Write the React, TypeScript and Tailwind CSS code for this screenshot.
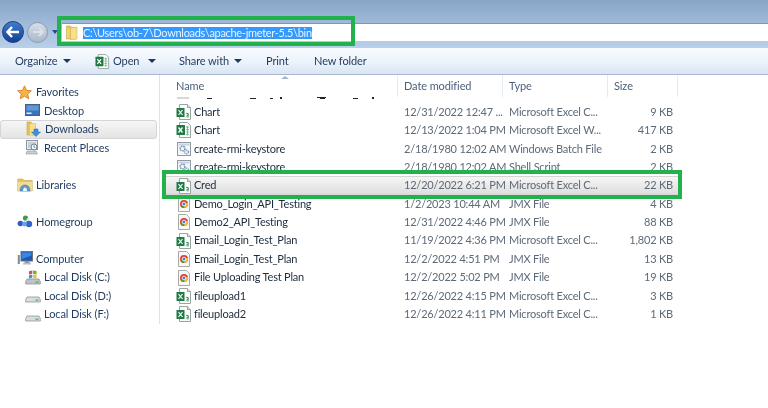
import type { ReactNode } from "react";

const ExcelCsv = () => (
  <svg width="16" height="16" viewBox="0 0 16 16">
    <path d="M3.5 .5h8l3 3v12h-11z" fill="#fbfcfb" stroke="#9aa5a0" />
    <path d="M11.5 .5v3h3" fill="#e4e9e6" stroke="#9aa5a0" />
    <rect x="0.5" y="4" width="8" height="9" fill="#1f7a45" rx="0.5" />
    <path d="M2.5 6l4 5M6.5 6l-4 5" stroke="#fff" strokeWidth="1.2" />
    <path d="M10 9.5a1.5 1.5 0 1 1 0 2.5M12 9v3.5M12.5 12.5l-.8 1.2" stroke="#2e7d51" strokeWidth="0.8" fill="none" />
  </svg>
);

const ExcelBook = ({ size = 16 }: { size?: number }) => (
  <svg width={size} height={size} viewBox="0 0 16 16" className="shrink-0">
    <path d="M3.5 .5h8l3 3v12h-11z" fill="#fbfcfb" stroke="#9aa5a0" />
    <rect x="0.5" y="3" width="8.5" height="10" fill="#1f7a45" rx="0.5" />
    <path d="M2.5 5.5l4 5M6.5 5.5l-4 5" stroke="#fff" strokeWidth="1.3" />
    <path d="M10 5h3M10 7.5h3M10 10h3M10 12.5h3M11.5 4v9.5" stroke="#6fae88" strokeWidth="0.8" fill="none" />
  </svg>
);

const ScriptIcon = () => (
  <svg width="16" height="16" viewBox="0 0 16 16">
    <rect x="1.5" y="1.5" width="13" height="13" fill="#f4f6f8" stroke="#8f9aa5" />
    <rect x="2.5" y="2.5" width="11" height="2" fill="#c7d3e0" />
    <circle cx="6.5" cy="7.5" r="2.4" fill="none" stroke="#5f86ad" strokeWidth="1.4" strokeDasharray="1.4 .8" />
    <circle cx="10.5" cy="11" r="1.9" fill="none" stroke="#6f8fb0" strokeWidth="1.2" strokeDasharray="1.2 .7" />
  </svg>
);

const JmxIcon = () => (
  <svg width="16" height="16" viewBox="0 0 16 16">
    <path d="M2.5 .5h8l3 3v12h-11z" fill="#f8f8f6" stroke="#a8aaa5" />
    <circle cx="8" cy="8" r="4" fill="#d9463a" />
    <path d="M8 8L4.6 10.2A4 4 0 0 0 8.5 12z" fill="#3f9e4d" />
    <path d="M8 8l.5 4A4 4 0 0 0 11.8 6.8z" fill="#f3c22f" />
    <circle cx="8" cy="8" r="1.8" fill="#3f7fdc" stroke="#fff" strokeWidth="0.8" />
  </svg>
);

const Folder = () => (
  <svg width="13" height="15" viewBox="0 0 12 15">
    <path d="M1 1h4l1 1.5h4.5V14H1z" fill="#e9c65f" stroke="#c9a446" strokeWidth="0.6" />
    <path d="M5 3l6.5-1v12L5 14.5z" fill="#f6e08e" stroke="#cfa94a" strokeWidth="0.5" />
    <path d="M1.5 4h2.5v9H1.5z" fill="#f3d777" />
  </svg>
);

const Star = () => (
  <svg width="15" height="15" viewBox="0 0 15 15">
    <path d="M7.5 .8l2 4.5 4.9.5-3.7 3.2 1.1 4.8-4.3-2.5-4.3 2.5 1.1-4.8L.6 5.8l4.9-.5z" fill="#f5b53f" stroke="#d8742a" strokeWidth="0.8" />
  </svg>
);

const DesktopIcon = () => (
  <svg width="15" height="13" viewBox="0 0 15 13">
    <rect x="0.5" y="0.5" width="14" height="11" fill="#3f73b8" stroke="#47617f" />
    <rect x="1.5" y="1.5" width="12" height="5" fill="#5f9ad8" />
    <rect x="1.5" y="8.5" width="5" height="1.5" fill="#e6eef6" />
  </svg>
);

const DownloadsIcon = () => (
  <svg width="15" height="16" viewBox="0 0 15 16">
    <path d="M1 1h4l1 1.5h3.5V14H1z" fill="#e6c25c" stroke="#c9a446" strokeWidth="0.6" />
    <path d="M4 3l5.5-1v11L4 14.5z" fill="#f6e08e" />
    <path d="M8 8h4v3h2.5L10 15.5 5.5 11H8z" fill="#3d8fe0" stroke="#2a6bb5" strokeWidth="0.5" />
  </svg>
);

const RecentIcon = () => (
  <svg width="15" height="15" viewBox="0 0 15 15">
    <rect x="1.5" y="0.5" width="11" height="9" fill="#e8ecef" stroke="#8d979f" />
    <rect x="3" y="2" width="8" height="6" fill="#c4d0da" />
    <circle cx="9" cy="7" r="3" fill="#f2f5f7" stroke="#6d8498" />
    <path d="M9 5.2V7l1.4.8" stroke="#4a6a85" strokeWidth="0.7" fill="none" />
    <path d="M2 11h9l1.5 3H1z" fill="#c9d0d6" stroke="#8d979f" strokeWidth="0.6" />
  </svg>
);

const LibraryIcon = () => (
  <svg width="16" height="14" viewBox="0 0 16 14">
    <path d="M.8 1h5l1 1.5h8.4V13H.8z" fill="#e4c468" stroke="#c2a24c" strokeWidth="0.6" />
    <path d="M1 4h14v9H1z" fill="#f2dc92" />
    <path d="M3 13c0-4 2-6 5-6s5 2 5 6z" fill="#5b9bd0" stroke="#3f78a8" strokeWidth="0.5" />
    <path d="M6 13c0-2 .8-3.4 2-3.4s2 1.4 2 3.4z" fill="#f0f4f8" />
  </svg>
);

const HomegroupIcon = () => (
  <svg width="16" height="14" viewBox="0 0 16 14">
    <circle cx="8.5" cy="3" r="2.6" fill="#3e9a46" />
    <circle cx="3.4" cy="8.5" r="2.8" fill="#2b5fbf" />
    <circle cx="12" cy="9" r="3.2" fill="#3267c8" />
    <circle cx="7.5" cy="9" r="2.4" fill="#6fa0e6" />
    <circle cx="11" cy="4.5" r="1.4" fill="#d8e6f6" />
  </svg>
);

const ComputerIcon = () => (
  <svg width="16" height="15" viewBox="0 0 16 15">
    <rect x="4" y="0.5" width="11.5" height="9.5" fill="#1d56b8" stroke="#6d7680" />
    <path d="M5 1.5h9.5v3L5 8z" fill="#3a86e0" />
    <rect x="7.5" y="10" width="5" height="2" fill="#8f98a0" />
    <rect x="6" y="12" width="8" height="1.5" fill="#b8bec4" />
    <rect x="0.8" y="4" width="2" height="9" fill="#7f8890" />
  </svg>
);

const DiskIcon = ({ windows }: { windows?: boolean }) => (
  <svg width="16" height="15" viewBox="0 0 16 15">
    {windows && (
      <g>
        <path d="M4 1.2l3.3-.7v3.3L4 4.5z" fill="#e0503a" />
        <path d="M8 .4l3.6.7v3.3L8 3.7z" fill="#6fb23f" />
        <path d="M4 5.2l3.3-.7v3.3L4 8.5z" fill="#3f8ed8" />
        <path d="M8 4.4l3.6.7v3.3L8 7.7z" fill="#f0c030" />
      </g>
    )}
    <path d="M2 9h12l1.3 2.5V14H.7v-2.5z" fill={windows ? "#b9c4cc" : "#d8dde1"} stroke="#7f8a92" strokeWidth="0.7" />
    <rect x="10.5" y="11.5" width="3" height="1.2" fill="#4fb04a" />
  </svg>
);

// bottom edge of the row scrolled out above "Chart"
const ClippedRow = () => (
  <svg width="220" height="6" viewBox="0 0 220 6" className="ml-[16px] block">
    <path d="M1 0h12v2H1z" fill="#d5d8d8" />
    <path d="M31 1h5v1h-5zM74 1h6v1h-6zM94 1h3v1h-3zM104 0h2v2h-2zM141 0h9v1h-9zM144 1h5v1h-5zM177 1h5v1h-5zM196 0h2v2h-2z" fill="#20262c" />
  </svg>
);

type FileRow = { icon: ReactNode; name: string; date: string; type: string; size: string; selected?: boolean };

const files: FileRow[] = [
  { icon: <ExcelCsv />, name: "Chart", date: "12/31/2022 12:47 ...", type: "Microsoft Excel C...", size: "9 KB" },
  { icon: <ExcelBook />, name: "Chart", date: "12/13/2022 1:04 PM", type: "Microsoft Excel W...", size: "417 KB" },
  { icon: <ScriptIcon />, name: "create-rmi-keystore", date: "2/18/1980 12:02 AM", type: "Windows Batch File", size: "2 KB" },
  { icon: <ScriptIcon />, name: "create-rmi-keystore", date: "2/18/1980 12:02 AM", type: "Shell Script", size: "2 KB" },
  { icon: <ExcelCsv />, name: "Cred", date: "12/20/2022 6:21 PM", type: "Microsoft Excel C...", size: "22 KB", selected: true },
  { icon: <JmxIcon />, name: "Demo_Login_API_Testing", date: "1/2/2023 10:44 AM", type: "JMX File", size: "4 KB" },
  { icon: <JmxIcon />, name: "Demo2_API_Testing", date: "12/31/2022 4:46 PM", type: "JMX File", size: "88 KB" },
  { icon: <ExcelCsv />, name: "Email_Login_Test_Plan", date: "11/19/2022 4:36 PM", type: "Microsoft Excel C...", size: "1,802 KB" },
  { icon: <JmxIcon />, name: "Email_Login_Test_Plan", date: "12/2/2022 4:51 PM", type: "JMX File", size: "13 KB" },
  { icon: <JmxIcon />, name: "File Uploading Test Plan", date: "12/2/2022 5:02 PM", type: "JMX File", size: "19 KB" },
  { icon: <ExcelCsv />, name: "fileupload1", date: "12/26/2022 4:15 PM", type: "Microsoft Excel C...", size: "3 KB" },
  { icon: <ExcelCsv />, name: "fileupload2", date: "12/26/2022 4:11 PM", type: "Microsoft Excel C...", size: "1 KB" },
];

type NavRow = { icon?: ReactNode; label?: string; child?: boolean; active?: boolean };

const nav: NavRow[] = [
  { icon: <Star />, label: "Favorites" },
  { icon: <DesktopIcon />, label: "Desktop", child: true },
  { icon: <DownloadsIcon />, label: "Downloads", child: true, active: true },
  { icon: <RecentIcon />, label: "Recent Places", child: true },
  {},
  { icon: <LibraryIcon />, label: "Libraries" },
  {},
  { icon: <HomegroupIcon />, label: "Homegroup" },
  {},
  { icon: <ComputerIcon />, label: "Computer" },
  { icon: <DiskIcon windows />, label: "Local Disk (C:)", child: true },
  { icon: <DiskIcon />, label: "Local Disk (D:)", child: true },
  { icon: <DiskIcon />, label: "Local Disk (F:)", child: true },
];

const Caret = () => <span className="h-0 w-0 border-x-[4px] border-t-[4px] border-x-transparent border-t-[#1e3a5f]" />;

const Toolbar = () => (
  <div className="flex h-[27px] items-center whitespace-nowrap border-b border-[#a9b8cc] bg-gradient-to-b from-[#f8fbff] via-[#eef4fb] to-[#d8e5f4] pl-[15px] text-[11px] tracking-[-0.1px] text-[#1e3a5f]">
    <div className="flex w-[80px] items-center gap-[6px]">Organize<Caret /></div>
    <div className="flex w-[84px] items-center">
      <ExcelBook size={15} />
      <span className="ml-[3px] mr-[9px]">Open</span>
      <Caret />
    </div>
    <div className="flex w-[87px] items-center gap-[5px]">Share with<Caret /></div>
    <span className="w-[48px]">Print</span>
    <span>New folder</span>
  </div>
);

const App = () => {
  return (
    <div className="relative h-[408px] w-[768px] overflow-hidden bg-white font-['Lato','Open_Sans',sans-serif] blur-[0.3px]">
      <div className="h-[48px] bg-gradient-to-b from-[#88a5c8] to-[#b9d0ea]">
        <div className="flex items-center pt-[23px]">
          <div className="ml-[2px] flex h-[18px] w-[60px] shrink-0 items-center">
            <div className="flex h-[22px] w-[22px] items-center justify-center rounded-full border border-[#1d3f7a] bg-gradient-to-b from-[#3f7ed0] to-[#123f95]">
              <svg width="14" height="12" viewBox="0 0 14 12"><path d="M6 1L1.5 6 6 11M2 6h11" stroke="#fff" strokeWidth="2.4" fill="none" /></svg>
            </div>
            <div className="ml-[3px] flex h-[21px] w-[21px] items-center justify-center rounded-full border border-[#8a9bb0] bg-gradient-to-b from-[#d5deea] to-[#a9b8ca]">
              <svg width="12" height="10" viewBox="0 0 12 10"><path d="M7 1l4 4-4 4M10 5H1" stroke="#d9e1ea" strokeWidth="2" fill="none" /></svg>
            </div>
            <span className="ml-[4px] h-0 w-0 border-x-[3px] border-t-[4px] border-x-transparent border-t-[#1e4f8f]" />
          </div>
          <div className="flex h-[18px] flex-1 items-center border-t border-[#6f9cc4] bg-white pl-[3px]">
            <Folder />
            <span className="ml-[5px] whitespace-nowrap bg-[#3399ff] text-[11px] leading-[12px] tracking-[-0.3px] text-[#e8f3ff]">C:\Users\ob-7\Downloads\apache-jmeter-5.5\bin</span>
          </div>
        </div>
      </div>
      <Toolbar />
      <div className="flex h-[249px]">
        <div className="w-[160px] shrink-0 border-r border-[#d9e4f0] pt-[8px] text-[11px] tracking-[-0.1px] text-[#1e3a5f]">
          {nav.map((row, i) => (
            <div
              key={i}
              className={`flex h-[18.5px] items-center whitespace-nowrap ${row.child ? "pl-[25px]" : "pl-[17px]"} ${row.active ? "mx-[1px] -translate-x-[1px] rounded-[3px] border border-[#d5d5d5] bg-gradient-to-b from-[#f6f6f6] to-[#e4e4e4]" : ""}`}
            >
              {row.icon && <span className="flex w-[19px] shrink-0 items-center">{row.icon}</span>}
              {row.label}
            </div>
          ))}
        </div>
        <div className="relative flex-1">
          <div className="flex h-[21.5px] text-[11px] tracking-[-0.1px] text-[#4c607a]">
            <div className="w-[238px] border-r border-[#e3ebf4] pl-[16px] pt-[3px]">Name</div>
            <div className="w-[105px] border-r border-[#e3ebf4] pl-[6px] pt-[3px]">Date modified</div>
            <div className="w-[105px] border-r border-[#e3ebf4] pl-[6px] pt-[3px]">Type</div>
            <div className="w-[70px] border-r border-[#e3ebf4] pl-[6px] pt-[3px]">Size</div>
          </div>
          <span className="absolute left-[121px] top-[1px] h-0 w-0 border-x-[4px] border-b-[3px] border-x-transparent border-b-[#9fb6cf]" />
          <div className="h-[227.5px] overflow-hidden text-[11px] tracking-[-0.2px]">
            <div className="h-[6.3px]"><ClippedRow /></div>
            {files.map((f) => (
              <div
                key={f.name + f.date}
                className={`flex h-[18.4px] items-center whitespace-nowrap ${f.selected ? "ml-[2px] w-[517px] rounded-[2px] border border-[#d5d5d5] bg-gradient-to-b from-[#f6f6f6] to-[#dedede]" : ""}`}
              >
                <div className={`flex shrink-0 items-center text-[#1c2b3d] ${f.selected ? "w-[236px] pl-[13px]" : "w-[239px] pl-[16px]"}`}>
                  <span className="w-[18px] shrink-0">{f.icon}</span>
                  {f.name}
                </div>
                <div className="w-[105px] shrink-0 pl-[5px] text-[#5d6a78]">{f.date}</div>
                <div className="w-[105px] shrink-0 pl-[5px] text-[#5d6a78]">{f.type}</div>
                <div className="w-[64px] shrink-0 text-right text-[#5d6a78]">{f.size}</div>
              </div>
            ))}
          </div>
        </div>
      </div>
      <div className="absolute left-[57px] top-[16px] h-[30px] w-[298px] border-[4px] border-[#22b14c]" />
      <div className="absolute left-[162px] top-[170px] h-[29px] w-[520px] border-[4px] border-[#22b14c]" />
    </div>
  );
};

export default App;
